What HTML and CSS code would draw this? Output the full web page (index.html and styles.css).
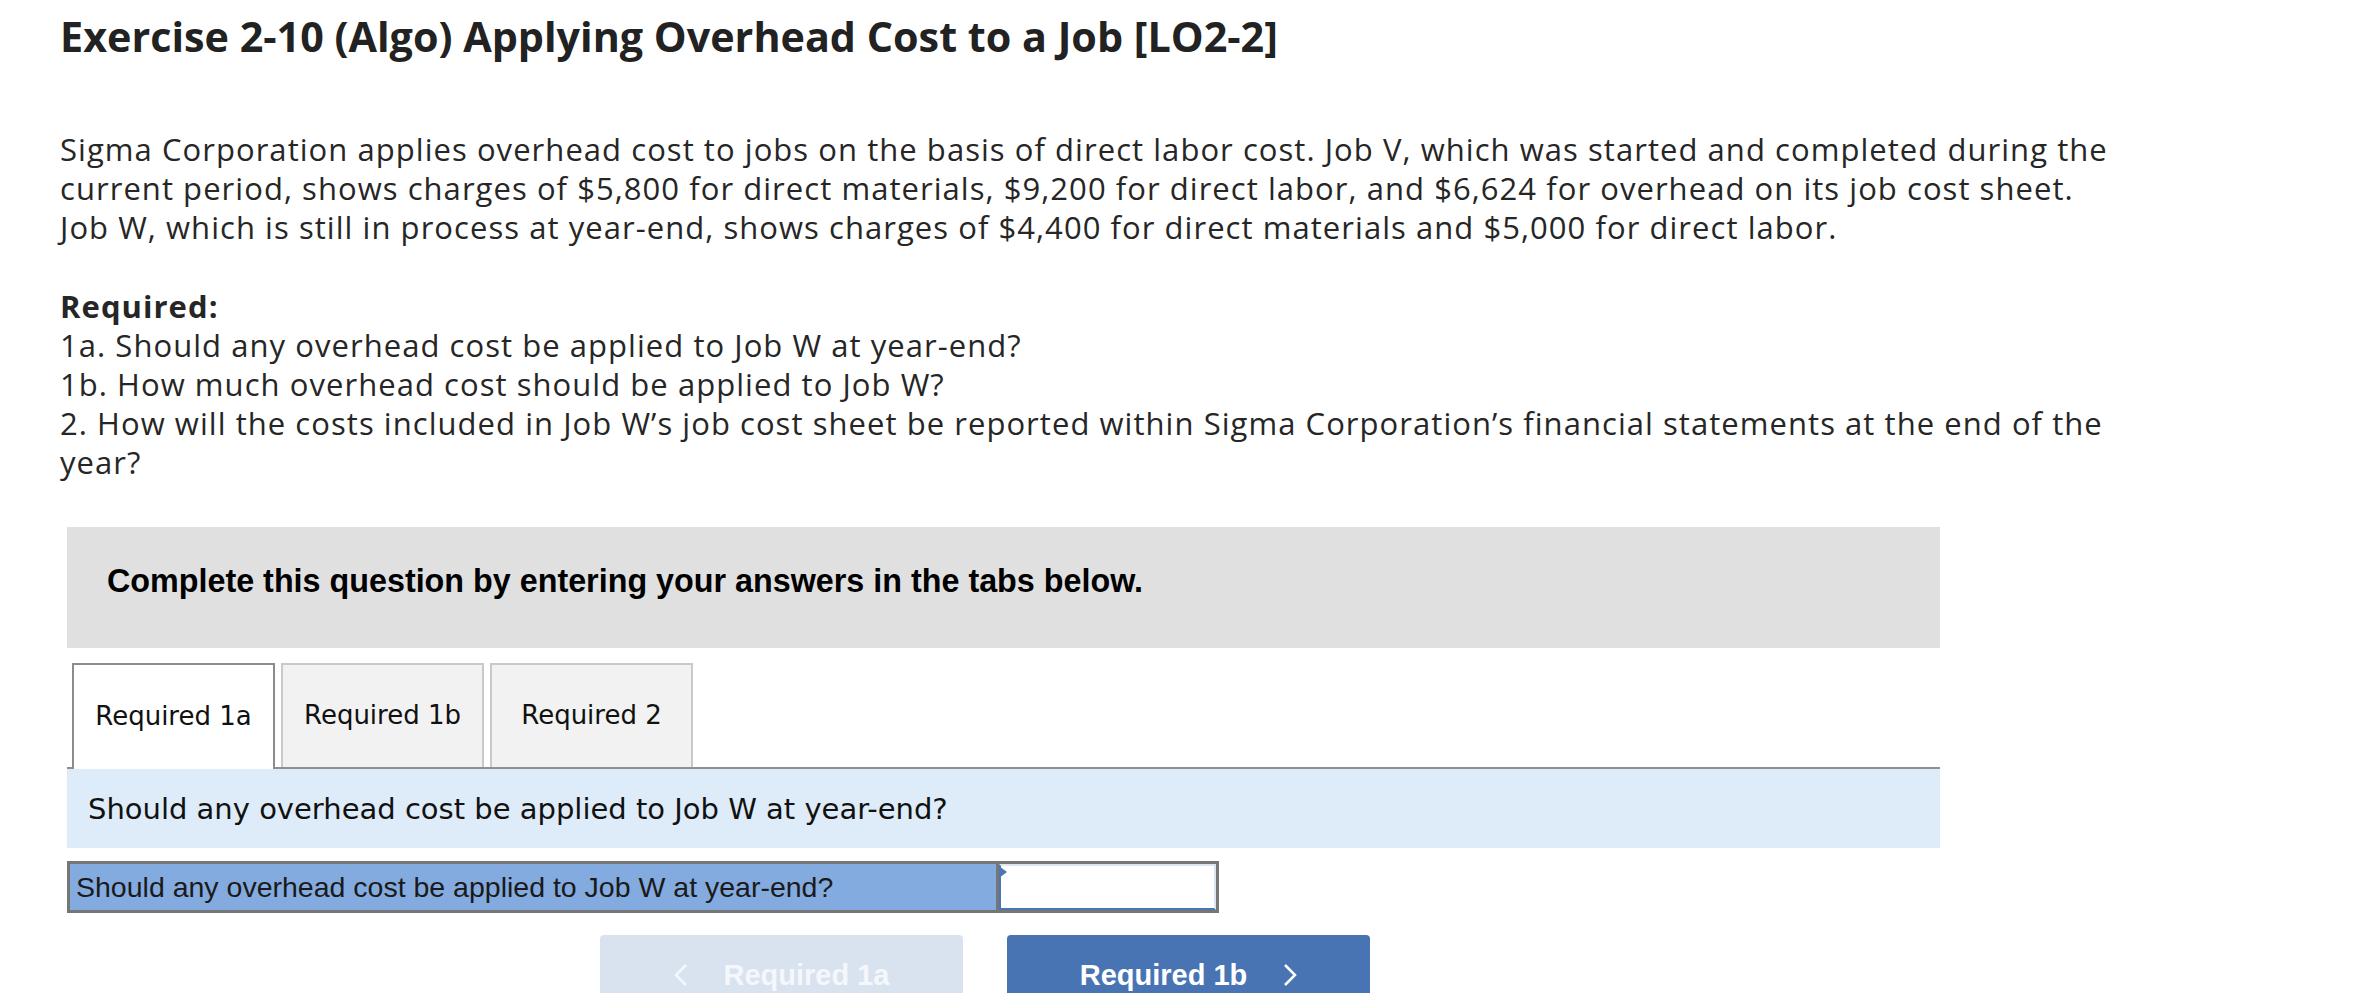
FILE: index.html
```html
<!DOCTYPE html>
<html lang="en">
<head>
    <meta charset="UTF-8">
    <meta name="viewport" content="width=device-width, initial-scale=1.0">
    <link rel="stylesheet" href="styles.css">
    <title>Exercise 2-10</title>
</head>
<body>
    <div class="page">
        <h1 class="title">Exercise 2-10 (Algo) Applying Overhead Cost to a Job [LO2-2]</h1>

        <p class="intro">Sigma Corporation applies overhead cost to jobs on the basis of direct labor cost. Job V, which was started and completed during the<br>current period, shows charges of $5,800 for direct materials, $9,200 for direct labor, and $6,624 for overhead on its job cost sheet.<br>Job W, which is still in process at year-end, shows charges of $4,400 for direct materials and $5,000 for direct labor.</p>

        <p class="required">
            <strong>Required:</strong><br>
            1a. Should any overhead cost be applied to Job W at year-end?<br>
            1b. How much overhead cost should be applied to Job W?<br>
            2. How will the costs included in Job W’s job cost sheet be reported within Sigma Corporation’s financial statements at the end of the<br>year?
        </p>

        <div class="question">
            <div class="instructions">Complete this question by entering your answers in the tabs below.</div>

            <div class="tabs">
                <a href="#req-1a" class="tab active">Required 1a</a>
                <a href="#req-1b" class="tab">Required 1b</a>
                <a href="#req-2" class="tab">Required 2</a>
            </div>

            <div class="tab-panel" id="req-1a">
                <div class="prompt">Should any overhead cost be applied to Job W at year-end?</div>

                <div class="answer-row">
                    <div class="answer-label">Should any overhead cost be applied to Job W at year-end?</div>
                    <div class="answer-cell"><span class="select-box"></span></div>
                </div>

                <div class="nav">
                    <button class="nav-btn prev" disabled>
                        <svg width="14" height="24" viewBox="0 0 14 24"><polyline points="12,2 2,12 12,22" fill="none" stroke="currentColor" stroke-width="2.5"/></svg>
                        Required 1a
                    </button>
                    <button class="nav-btn next">
                        Required 1b
                        <svg width="14" height="24" viewBox="0 0 14 24"><polyline points="2,2 12,12 2,22" fill="none" stroke="currentColor" stroke-width="2.5"/></svg>
                    </button>
                </div>
            </div>
        </div>
    </div>
</body>
</html>
```

FILE: styles.css
```css
body {
    margin: 0;
    background: #fff;
    color: #262626;
}
.page {
    padding: 12px 0 0 60px;
    font-family: "Open Sans", "Lato", sans-serif;
}
.title {
    margin: 0;
    font-size: 41.3px;
    line-height: 48px;
    font-weight: 700;
    color: #222;
}
.intro,
.required {
    margin: 0;
    font-size: 31px;
    line-height: 39px;
    letter-spacing: 1.05px;
}
.intro {
    margin-top: 70px;
}
.required {
    margin-top: 40px;
}
.required strong {
    font-weight: 700;
}

/* question widget */
.question {
    margin: 45px 0 0 7px;
    width: 1873px;
}
.instructions {
    background: #e0e0e0;
    height: 121px;
    padding-left: 40px;
    display: flex;
    align-items: center;
    font-family: "Liberation Sans", Arial, sans-serif;
    font-weight: 700;
    font-size: 32.3px;
    color: #000;
    padding-bottom: 12px;
    box-sizing: border-box;
}
.tabs {
    margin-top: 15px;
    padding-left: 5px;
    display: flex;
    gap: 6px;
    border-bottom: 2px solid #909090;
}
.tab {
    width: 203px;
    height: 104px;
    box-sizing: border-box;
    display: flex;
    align-items: center;
    justify-content: center;
    background: #f2f2f2;
    border: 2px solid #c9c9c9;
    border-bottom: none;
    font-family: "DejaVu Sans", Verdana, sans-serif;
    font-size: 26px;
    color: #111;
    text-decoration: none;
    padding-bottom: 2px;
}
.tab.active {
    background: #fff;
    border-color: #8c8c8c;
    margin-bottom: -2px;
    height: 106px;
}
.prompt {
    background: #deebf8;
    height: 79px;
    padding-left: 21px;
    display: flex;
    align-items: center;
    font-family: "DejaVu Sans", Verdana, sans-serif;
    font-size: 29px;
    color: #111;
}
.answer-row {
    margin-top: 13px;
    display: inline-flex;
    border: 3px solid #767676;
    height: 52px;
    box-sizing: border-box;
}
.answer-label {
    width: 920px;
    background: #84abdf;
    padding-left: 6px;
    display: flex;
    align-items: center;
    font-family: "Liberation Sans", Arial, sans-serif;
    font-size: 28.5px;
    color: #1a1a1a;
    border-right: 3px solid #767676;
}
.answer-cell {
    width: 217px;
    background: #fff;
    position: relative;
}
.select-box {
    display: block;
    height: 100%;
    box-sizing: border-box;
    border: 2px solid #dbe5f3;
    border-left: 2px solid #4a76b4;
    border-bottom: 2px solid #4a76b4;
}
.select-box::before {
    content: "";
    position: absolute;
    left: 0;
    top: 2px;
    border-top: 6px solid transparent;
    border-bottom: 6px solid transparent;
    border-left: 8px solid #4a76b4;
}
.nav {
    margin: 22px 0 0 533px;
    display: flex;
    gap: 44px;
}
.nav-btn {
    width: 363px;
    height: 80px;
    border: none;
    border-radius: 4px;
    display: flex;
    align-items: center;
    justify-content: center;
    gap: 36px;
    font-family: "Liberation Sans", Arial, sans-serif;
    font-weight: 700;
    font-size: 29px;
    color: #fff;
    padding: 0;
}
.nav-btn.prev {
    background: #d9e3ef;
    color: #f4f7fb;
}
.nav-btn.next {
    background: #4874b3;
}
```
